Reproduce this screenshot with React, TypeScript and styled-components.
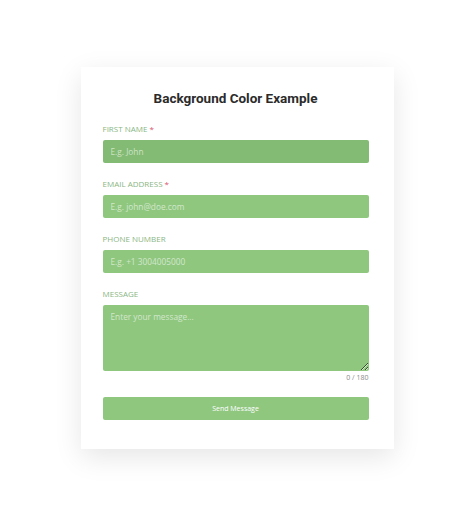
import React, { useState } from 'react';
import styled, { createGlobalStyle } from 'styled-components';

const GlobalStyle = createGlobalStyle`
  html, body { margin: 0; padding: 0; background: #ffffff; }
  * { box-sizing: border-box; }
`;

const Page = styled.div`
  display: flex;
  justify-content: center;
  padding-top: 67px;
  width: 474px;
  height: 514px;
  font-family: 'Open Sans', 'Noto Sans', sans-serif;
`;

const Card = styled.form`
  width: 313px;
  height: 382px;
  padding: 21px 25px 0 22px;
  background: #fff;
  box-shadow: 0 8px 26px rgba(0, 0, 0, 0.1);
  display: flex;
  flex-direction: column;
`;

const Title = styled.h2`
  margin: 0 0 15px;
  font-family: Roboto, 'Liberation Sans', sans-serif;
  font-weight: 700;
  font-size: 13.5px;
  line-height: 20px;
  color: #2b2b2b;
  text-align: center;
`;

const Field = styled.div<{ $gap?: number }>`
  display: flex;
  flex-direction: column;
  margin-bottom: ${p => p.$gap ?? 15}px;
`;

const Label = styled.label`
  font-size: 8px;
  line-height: 11px;
  color: #8ab683;
  text-transform: uppercase;
  margin-bottom: 6px;
`;

const Req = styled.span`
  color: #d6566b;
`;

const Input = styled.input<{ $active?: boolean }>`
  height: 23px;
  border: none;
  border-radius: 2px;
  background: ${p => (p.$active ? '#83bb74' : '#8fc77f')};
  padding: 0 8px;
  font-family: inherit;
  font-size: 8.3px;
  color: #fff;
  outline: none;
  &::placeholder { color: rgba(255, 255, 255, 0.6); }
`;

const Area = styled.textarea`
  height: 66px;
  border: none;
  border-radius: 2px;
  background: #8fc77f;
  padding: 6px 8px;
  font-family: inherit;
  font-size: 8.3px;
  color: #fff;
  outline: none;
  resize: vertical;
  &::placeholder { color: rgba(255, 255, 255, 0.6); }
`;

const Counter = styled.div`
  text-align: right;
  font-size: 7px;
  line-height: 10px;
  color: #8a8a8a;
  margin-top: 2px;
`;

const Button = styled.button`
  height: 23px;
  border: none;
  border-radius: 2px;
  background: #8fc77f;
  color: #fff;
  font-family: inherit;
  font-size: 7px;
  cursor: pointer;
`;

export default function App() {
  const [msg, setMsg] = useState('');
  return (
    <>
      <GlobalStyle />
      <Page>
        <Card onSubmit={e => e.preventDefault()}>
          <Title>Background Color Example</Title>
          <Field>
            <Label>First Name <Req>*</Req></Label>
            <Input $active placeholder="E.g. John" />
          </Field>
          <Field>
            <Label>Email Address <Req>*</Req></Label>
            <Input placeholder="E.g. john@doe.com" />
          </Field>
          <Field>
            <Label>Phone Number</Label>
            <Input placeholder="E.g. +1 3004005000" />
          </Field>
          <Field $gap={14}>
            <Label>Message</Label>
            <Area
              placeholder="Enter your message..."
              value={msg}
              maxLength={180}
              onChange={e => setMsg(e.target.value)}
            />
            <Counter>{msg.length} / 180</Counter>
          </Field>
          <Button type="submit">Send Message</Button>
        </Card>
      </Page>
    </>
  );
}
